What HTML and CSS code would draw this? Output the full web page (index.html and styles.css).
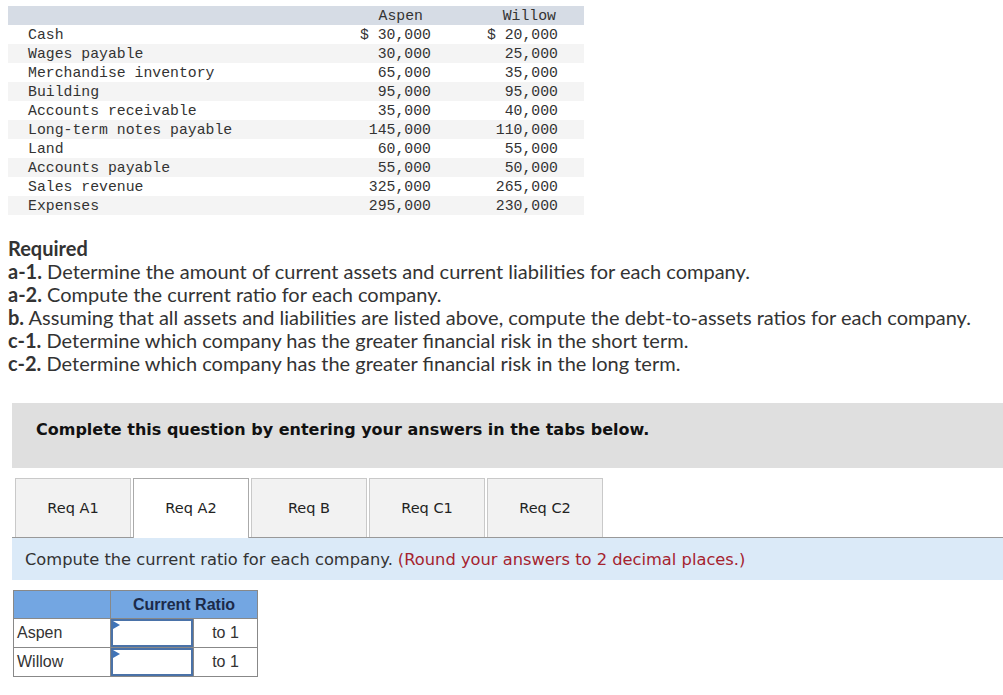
FILE: index.html
```html
<!DOCTYPE html>
<html>
<head>
<meta charset="utf-8">
<link rel="stylesheet" href="styles.css">
</head>
<body>
<div class="data">
  <div class="row head"><span class="lbl"></span><span class="a">Aspen</span><span class="w">Willow</span></div>
  <div class="row"><span class="lbl">Cash</span><span class="a">$ 30,000</span><span class="w">$ 20,000</span></div>
  <div class="row alt"><span class="lbl">Wages payable</span><span class="a">30,000</span><span class="w">25,000</span></div>
  <div class="row"><span class="lbl">Merchandise inventory</span><span class="a">65,000</span><span class="w">35,000</span></div>
  <div class="row alt"><span class="lbl">Building</span><span class="a">95,000</span><span class="w">95,000</span></div>
  <div class="row"><span class="lbl">Accounts receivable</span><span class="a">35,000</span><span class="w">40,000</span></div>
  <div class="row alt"><span class="lbl">Long-term notes payable</span><span class="a">145,000</span><span class="w">110,000</span></div>
  <div class="row"><span class="lbl">Land</span><span class="a">60,000</span><span class="w">55,000</span></div>
  <div class="row alt"><span class="lbl">Accounts payable</span><span class="a">55,000</span><span class="w">50,000</span></div>
  <div class="row"><span class="lbl">Sales revenue</span><span class="a">325,000</span><span class="w">265,000</span></div>
  <div class="row alt"><span class="lbl">Expenses</span><span class="a">295,000</span><span class="w">230,000</span></div>
</div>

<div class="required">
  <div class="req-title">Required</div>
  <div><b>a-1.</b> Determine the amount of current assets and current liabilities for each company.</div>
  <div><b>a-2.</b> Compute the current ratio for each company.</div>
  <div><b>b.</b> Assuming that all assets and liabilities are listed above, compute the debt-to-assets ratios for each company.</div>
  <div><b>c-1.</b> Determine which company has the greater financial risk in the short term.</div>
  <div><b>c-2.</b> Determine which company has the greater financial risk in the long term.</div>
</div>

<div class="complete">Complete this question by entering your answers in the tabs below.</div>

<div class="tabs">
  <div class="tab">Req A1</div>
  <div class="tab active">Req A2</div>
  <div class="tab">Req B</div>
  <div class="tab">Req C1</div>
  <div class="tab">Req C2</div>
</div>
<div class="instr">Compute the current ratio for each company. <span class="red">(Round your answers to 2 decimal places.)</span></div>

<table class="answer">
  <colgroup><col class="c1"><col class="c2"><col class="c3"></colgroup>
  <tr class="ahead"><th></th><th colspan="2">Current Ratio</th></tr>
  <tr class="r1"><td class="name">Aspen</td><td class="inp"><div class="box"></div></td><td class="to">to 1</td></tr>
  <tr class="r2"><td class="name">Willow</td><td class="inp"><div class="box"></div></td><td class="to">to 1</td></tr>
</table>
</body>
</html>
```

FILE: styles.css
```css
html, body { margin: 0; padding: 0; background: #fff; }
body { padding-top: 6px; }

.data {
  margin-left: 8px;
  width: 576px;
  font-family: "Liberation Mono", "DejaVu Sans Mono", monospace;
  font-size: 14.8px;
  color: #333;
}
.row {
  display: grid;
  grid-template-columns: 337px 115px 124px;
  height: 19px;
  line-height: 20px;
}
.row.head { background: #d6dce5; }
.row.alt { background: #f4f4f4; }
.row .lbl { padding-left: 20px; }
.row .a { text-align: right; padding-right: 29px; }
.row .w { text-align: right; padding-right: 26px; }
.row.head .a { padding-right: 37px; }
.row.head .w { padding-right: 28px; }

.required {
  margin: 22px 0 0 8px;
  font-family: Lato, "Open Sans", sans-serif;
  font-size: 20px;
  line-height: 23px;
  color: #333;
}
.req-title { font-weight: bold; }

.complete {
  margin: 28px 0 0 12px;
  height: 65px;
  box-sizing: border-box;
  background: #dfdfdf;
  padding: 17px 0 0 24px;
  line-height: 20px;
  font-family: "DejaVu Sans", Verdana, sans-serif;
  font-weight: bold;
  font-size: 16px;
  color: #111;
}

.tabs {
  margin: 10px 0 0 15px;
  display: flex;
  gap: 2px;
  height: 59px;
  position: relative;
  z-index: 1;
}
.tab {
  width: 116px;
  height: 59px;
  box-sizing: border-box;
  border: 1px solid #c9c9c9;
  border-bottom: none;
  background: #f2f2f2;
  display: flex;
  align-items: center;
  justify-content: center;
  font-family: "DejaVu Sans", Verdana, sans-serif;
  font-size: 14.5px;
  color: #222;
}
.tab.active {
  background: #fff;
  height: 60px;
  padding-bottom: 1px;
  border-color: #aaa;
}

.instr {
  margin-left: 12px;
  height: 43px;
  box-sizing: border-box;
  border-top: 1px solid #999;
  background: #dbeaf8;
  padding-left: 13px;
  display: flex;
  align-items: center;
  font-family: "DejaVu Sans", Verdana, sans-serif;
  font-size: 16.3px;
  color: #333;
}
.red { color: #a5232f; margin-left: 5px; }

.answer {
  margin: 10px 0 0 13px;
  border-collapse: collapse;
  table-layout: fixed;
  width: 244px;
  font-family: "Liberation Sans", Arial, sans-serif;
  font-size: 16px;
  color: #333;
}
.c1 { width: 97px; }
.c2 { width: 83px; }
.c3 { width: 64px; }
.answer td, .answer th { border: 1px solid #888; padding: 0; }
.ahead { height: 28px; background: #73a6e2; }
.ahead th { color: #1b2a4a; font-weight: bold; font-size: 16px; }
.r1 { height: 29px; }
.r2 { height: 28px; }
.answer .name { padding-left: 3px; }
.answer .inp { position: relative; }
.answer .to { text-align: center; }
.box {
  box-sizing: border-box;
  height: 28px;
  border: 2px solid #4a72a8;
  background: #fff;
  position: relative;
}
.box::before {
  content: "";
  position: absolute;
  left: 0; top: 0;
  border-left: 7px solid #3f74b8;
  border-top: 4px solid transparent;
  border-bottom: 4px solid transparent;
}
```
